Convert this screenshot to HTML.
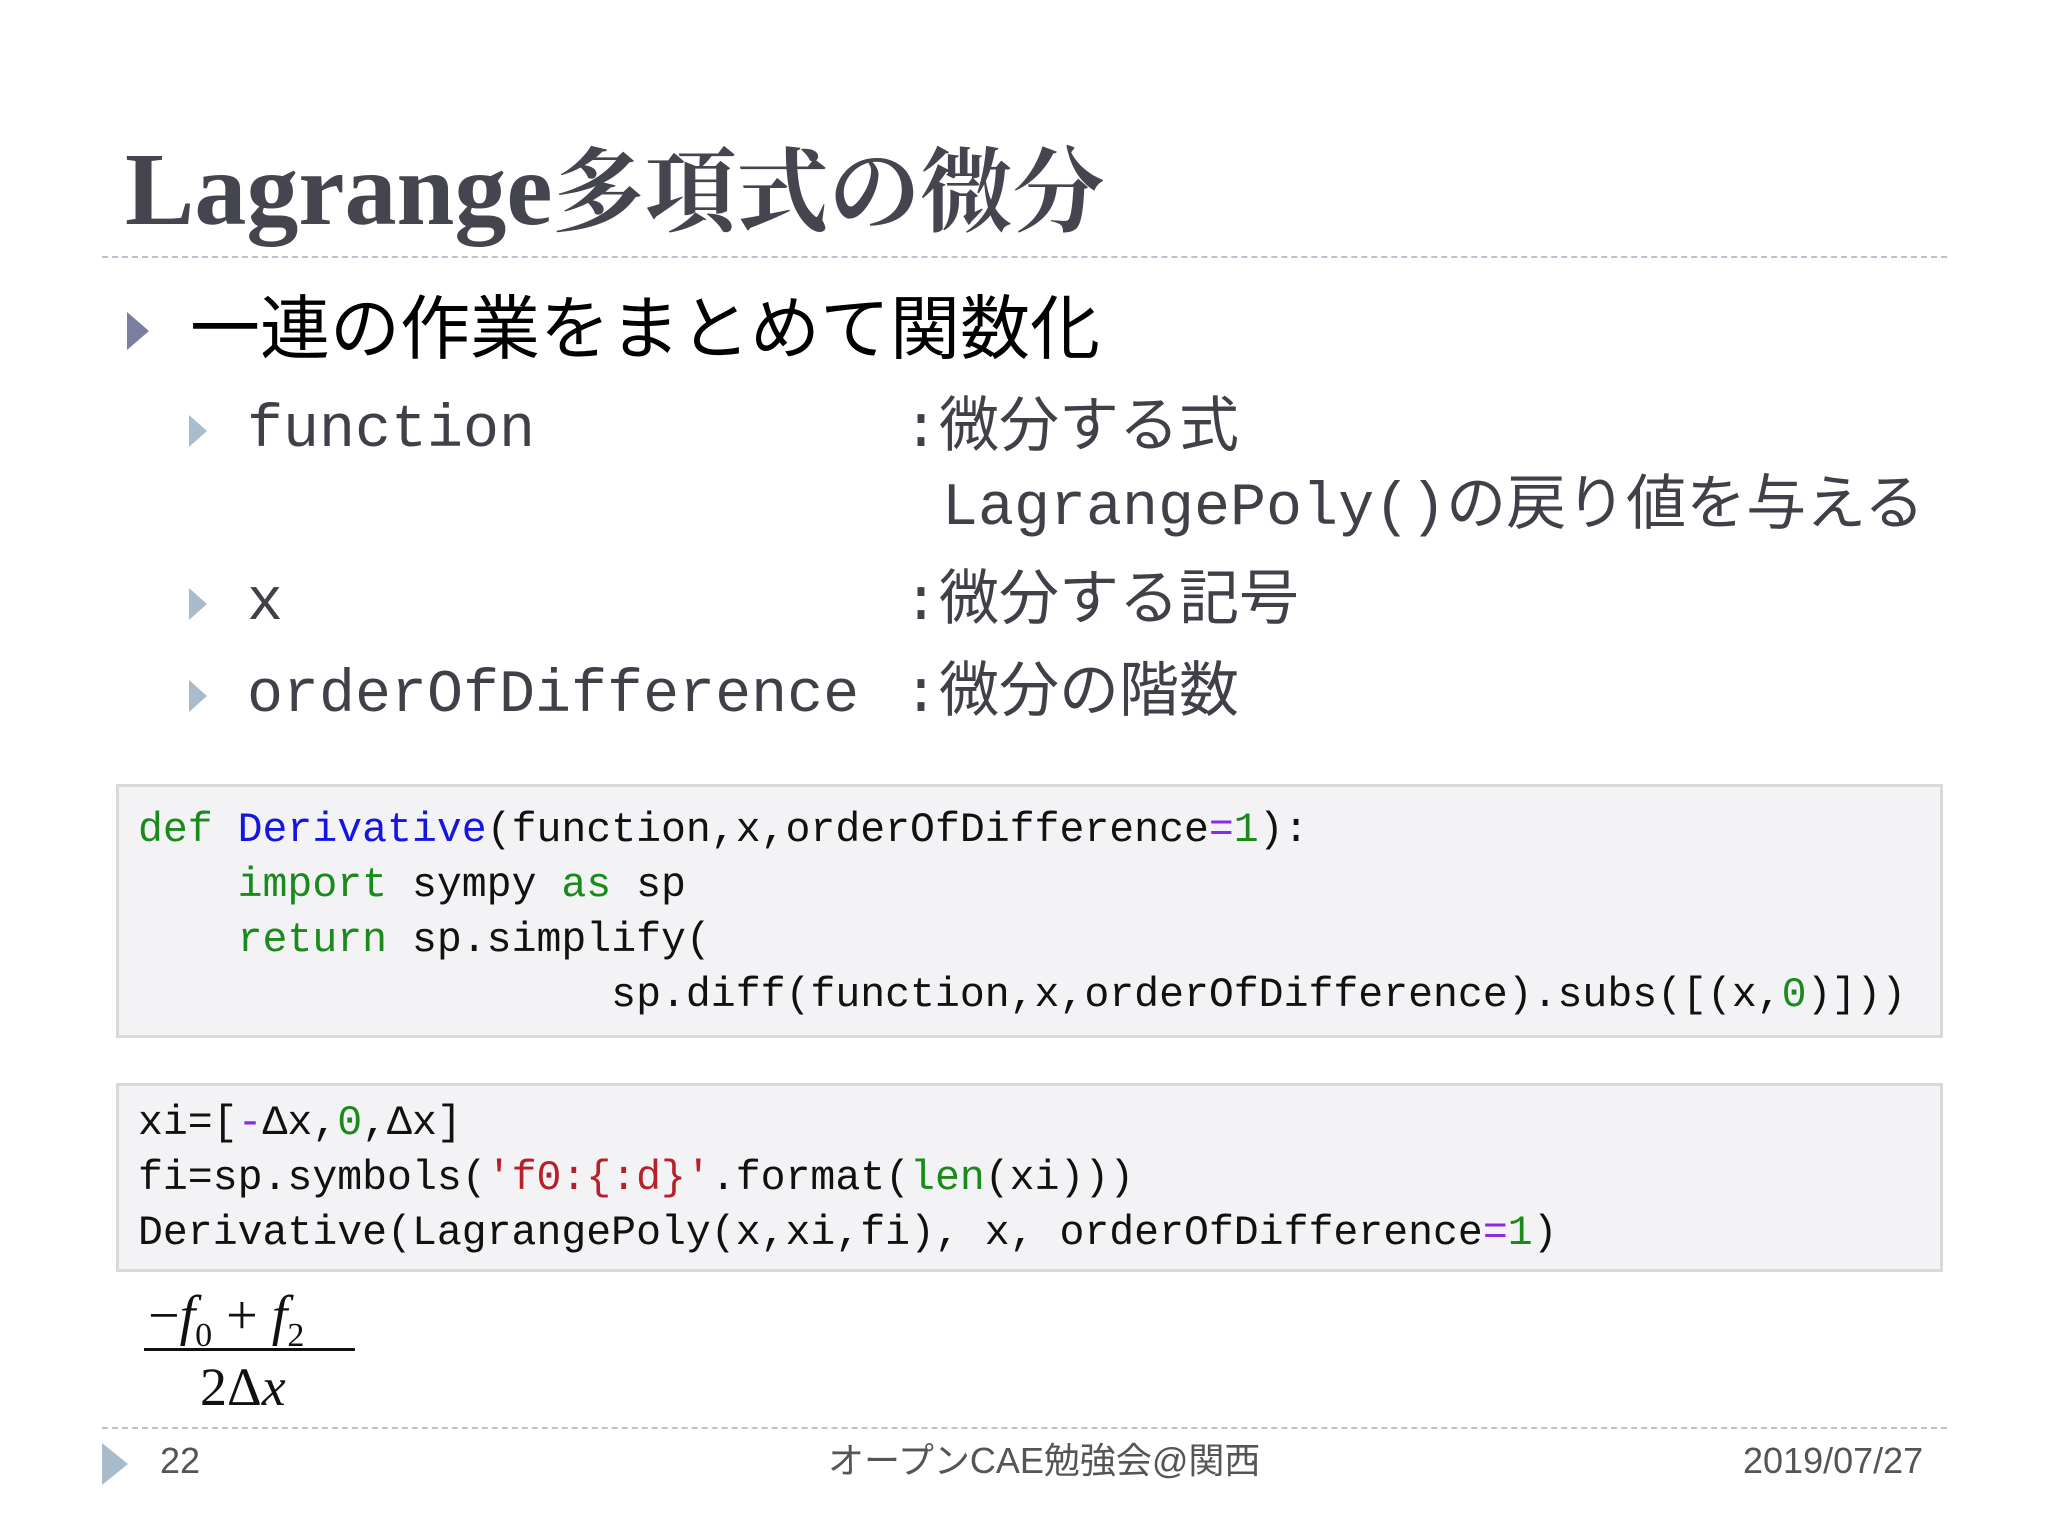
<!DOCTYPE html>
<html><head><meta charset="utf-8"><style>
body{margin:0;width:2048px;height:1536px;background:#fff;position:relative;overflow:hidden}
.a{position:absolute;white-space:pre}
.t{font-family:"Liberation Serif","Noto Serif CJK SC",serif;font-size:92px;line-height:92px;color:#45454f;font-weight:bold}
.b1{font-family:"Liberation Sans","Noto Sans CJK JP",sans-serif;font-size:70px;line-height:70px;color:#000}
.s{font-family:"Liberation Mono","Noto Sans CJK JP",monospace;font-size:60px;line-height:60px;color:#404048}
.c{font-family:"Liberation Mono",monospace;font-size:41.5px;line-height:42px;color:#111}
.box{position:absolute;background:#f3f3f5;border:3px solid #d9d9d9;box-sizing:border-box}
.dash{position:absolute;height:0;border-top:2px dashed #b8c4d0}
.g{color:#1a8a1a}.bl{color:#1515e0}.p{color:#8a2be2}.r{color:#b5202a}
.f{font-family:"Liberation Sans","Noto Sans CJK JP",sans-serif;font-size:36px;line-height:36px;color:#555}
</style></head><body>
<div class="a t" style="left:125px;top:144px"><span style="font-size:104px">Lagrange</span>多項式の微分</div>
<div class="dash" style="left:102px;top:256px;width:1845px"></div>
<svg class="a" style="left:127px;top:312px" width="22" height="38"><polygon points="0,0 22,19 0,38" fill="#7a7fa0"/></svg>
<div class="a b1" style="left:190px;top:294px">一連の作業をまとめて関数化</div>
<svg class="a" style="left:189px;top:415px" width="18" height="32"><polygon points="0,0 18,16 0,32" fill="#a8bccc"/></svg>
<svg class="a" style="left:189px;top:588px" width="18" height="32"><polygon points="0,0 18,16 0,32" fill="#a8bccc"/></svg>
<svg class="a" style="left:189px;top:680px" width="18" height="32"><polygon points="0,0 18,16 0,32" fill="#a8bccc"/></svg>
<div class="a s" style="left:247px;top:401px">function</div>
<div class="a s" style="left:903px;top:401px">:微分する式</div>
<div class="a s" style="left:942px;top:479px">LagrangePoly()の戻り値を与える</div>
<div class="a s" style="left:247px;top:574px">x</div>
<div class="a s" style="left:903px;top:574px">:微分する記号</div>
<div class="a s" style="left:247px;top:666px">orderOfDifference</div>
<div class="a s" style="left:903px;top:666px">:微分の階数</div>

<div class="box" style="left:116px;top:784px;width:1827px;height:254px"></div>
<div class="a c" style="left:138px;top:810px"><span class="g">def</span> <span class="bl">Derivative</span>(function,x,orderOfDifference<span class="p">=</span><span class="g">1</span>):</div>
<div class="a c" style="left:138px;top:865px">    <span class="g">import</span> sympy <span class="g">as</span> sp</div>
<div class="a c" style="left:138px;top:920px">    <span class="g">return</span> sp.simplify(</div>
<div class="a c" style="left:138px;top:975px">                   sp.diff(function,x,orderOfDifference).subs([(x,<span class="g">0</span>)]))</div>

<div class="box" style="left:116px;top:1083px;width:1827px;height:189px"></div>
<div class="a c" style="left:138px;top:1103px">xi=[<span class="p">-</span>Δx,<span class="g">0</span>,Δx]</div>
<div class="a c" style="left:138px;top:1158px">fi=sp.symbols(<span class="r">'f0:{:d}'</span>.format(<span class="g">len</span>(xi)))</div>
<div class="a c" style="left:138px;top:1213px">Derivative(LagrangePoly(x,xi,fi), x, orderOfDifference<span class="p">=</span><span class="g">1</span>)</div>

<div class="a" style="left:148px;top:1288px;font-family:'Liberation Serif',serif;font-size:56px;line-height:56px;color:#111">−<i>f</i><sub style="font-size:34px">0</sub> + <i>f</i><sub style="font-size:34px">2</sub></div>
<div class="a" style="left:144px;top:1348px;width:211px;height:3px;background:#111"></div>
<div class="a" style="left:200px;top:1360px;font-family:'Liberation Serif',serif;font-size:54px;line-height:54px;color:#111">2Δ<i>x</i></div>

<div class="dash" style="left:102px;top:1427px;width:1845px"></div>
<svg class="a" style="left:102px;top:1443px" width="26" height="42"><polygon points="0,0 26,21 0,42" fill="#a8bccc"/></svg>
<div class="a f" style="left:160px;top:1443px">22</div>
<div class="a f" style="left:828px;top:1443px">オープンCAE勉強会@関西</div>
<div class="a f" style="left:1743px;top:1443px">2019/07/27</div>
</body></html>
